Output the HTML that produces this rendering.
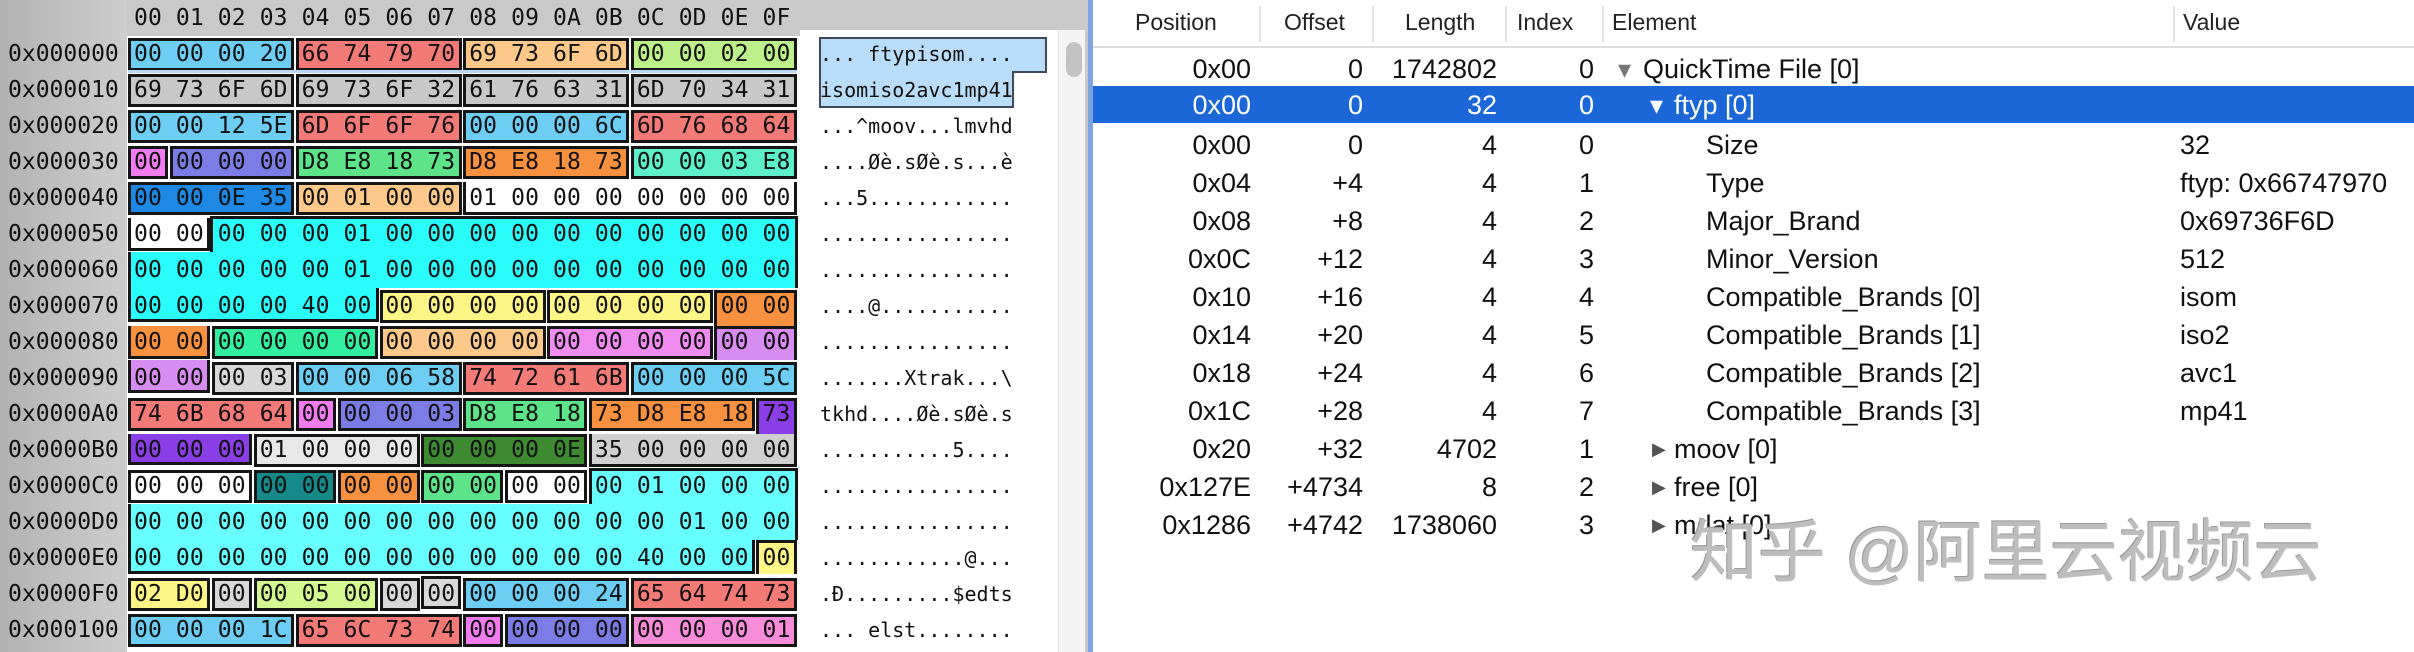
<!DOCTYPE html>
<html><head><meta charset="utf-8"><style>
*{margin:0;padding:0}
body{width:2414px;height:652px;position:relative;overflow:hidden;background:#fff;font-family:"Liberation Sans",sans-serif}
.a{position:absolute}
i{position:absolute;height:33px;border:3px solid #151515;box-sizing:border-box;display:block}
i.n{border-top:none;border-bottom:none;height:36px}
.m{font-family:"DejaVu Sans Mono","Liberation Mono",monospace;white-space:pre;position:absolute;line-height:36px;height:36px;color:#111}
.hx{left:134px;font-size:23px;letter-spacing:0.12px}
.of{left:8px;font-size:23px}
.as{left:820px;font-size:20px}
.r{position:absolute;left:0;width:2414px;height:38px;line-height:38px;font-size:27px;color:#111}
.r span{position:absolute;white-space:pre}
.p{right:1163px}.o{right:1051px}.l{right:917px}.x{right:820px}.e{left:1706px}.v{left:2180px}
.h{position:absolute;top:0;line-height:44px;font-size:23px;color:#222}
.d{position:absolute;top:6px;height:36px;width:2px;background:#e2e2e2}
.tri{font-size:26px}
</style></head><body>
<div class="a" style="left:0;top:0;width:1087px;height:36px;background:#c9c9c9"></div>
<div class="a" style="left:0;top:0;width:127px;height:652px;background:linear-gradient(90deg,#b2b2b2,#cdcdcd)"></div>
<div class="a" style="left:800px;top:30px;width:258px;height:622px;background:#fff"></div>
<div class="a" style="left:1058px;top:30px;width:27px;height:622px;background:#f4f4f4;border-left:1px solid #e4e4e4"></div>
<div class="a" style="left:1066px;top:42px;width:16px;height:35px;background:#c2c2c2;border-radius:8px"></div>
<div class="a" style="left:1085px;top:0;width:3px;height:652px;background:#c9c9c9"></div>
<div class="a" style="left:1088px;top:0;width:5px;height:652px;background:#7ea3e0"></div>

<i style="left:128px;top:38px;width:166px;background:#6dcdf2"></i>
<i style="left:296px;top:38px;width:166px;background:#f47a78"></i>
<i style="left:463px;top:38px;width:166px;background:#fdc98a"></i>
<i style="left:631px;top:38px;width:166px;background:#bdf08a"></i>
<div class="a" style="left:128px;top:70px;width:669px;height:3px;background:#b9d6f3"></div>
<i style="left:128px;top:74px;width:166px;background:#c8c8c8"></i>
<i style="left:296px;top:74px;width:166px;background:#c8c8c8"></i>
<i style="left:463px;top:74px;width:166px;background:#c8c8c8"></i>
<i style="left:631px;top:74px;width:166px;background:#c8c8c8"></i>
<i style="left:128px;top:110px;width:166px;background:#6dcdf2"></i>
<i style="left:296px;top:110px;width:166px;background:#f47a78"></i>
<i style="left:463px;top:110px;width:166px;background:#6dcdf2"></i>
<i style="left:631px;top:110px;width:166px;background:#f47a78"></i>
<i style="left:128px;top:146px;width:40px;background:#f07cf0"></i>
<i style="left:170px;top:146px;width:124px;background:#7c7ce6"></i>
<i style="left:296px;top:146px;width:166px;background:#5de48a"></i>
<i style="left:463px;top:146px;width:166px;background:#f7913f"></i>
<i style="left:631px;top:146px;width:166px;background:#5ef0c8"></i>
<i style="left:128px;top:182px;width:166px;background:#1e88e5"></i>
<i style="left:296px;top:182px;width:166px;background:#fdc98a"></i>
<i style="left:463px;top:182px;width:334px;background:#fff;border-top:none"></i>
<i style="left:128px;top:218px;width:82px;background:#fff;border-top:none"></i>
<i class="n" style="left:210px;top:216px;width:588px;background:#2afcfc;border-top:3px solid #151515;height:36px"></i>
<i class="n" style="left:128px;top:252px;width:670px;background:#2afcfc"></i>
<i class="n" style="left:128px;top:288px;width:251px;background:#2afcfc;border-bottom:3px solid #151515;height:34px"></i>
<i style="left:380px;top:290px;width:166px;background:#fdf585"></i>
<i style="left:547px;top:290px;width:166px;background:#fdf585"></i>
<i style="left:714px;top:290px;width:83px;background:#f7913f;border-bottom:none;height:36px"></i>
<i style="left:128px;top:326px;width:82px;background:#f7913f;border-top:none"></i>
<i style="left:212px;top:326px;width:166px;background:#33f0a0"></i>
<i style="left:380px;top:326px;width:166px;background:#fdc98a"></i>
<i style="left:547px;top:326px;width:166px;background:#f08cf0"></i>
<i style="left:714px;top:326px;width:83px;background:#d68cf0;border-bottom:none;height:34px"></i>
<i style="left:128px;top:360px;width:82px;background:#d68cf0;border-top:none"></i>
<i style="left:212px;top:362px;width:82px;background:#d8d8d8"></i>
<i style="left:296px;top:362px;width:166px;background:#6dcdf2"></i>
<i style="left:463px;top:362px;width:166px;background:#f47a78"></i>
<i style="left:631px;top:362px;width:166px;background:#6dcdf2"></i>
<i style="left:128px;top:398px;width:166px;background:#f47a78"></i>
<i style="left:296px;top:398px;width:40px;background:#f07cf0"></i>
<i style="left:338px;top:398px;width:124px;background:#7c7ce6"></i>
<i style="left:463px;top:398px;width:124px;background:#5de48a"></i>
<i style="left:589px;top:398px;width:166px;background:#f7913f"></i>
<i style="left:756px;top:398px;width:41px;background:#8a3ee6;border-bottom:none;height:36px"></i>
<i style="left:128px;top:434px;width:124px;background:#8a3ee6;border-top:none;height:31px"></i>
<i style="left:254px;top:434px;width:166px;background:#e8e8e8"></i>
<i style="left:421px;top:434px;width:166px;background:#3d8a30"></i>
<i style="left:589px;top:434px;width:208px;background:#d0d0d0;border-top:none"></i>
<i style="left:128px;top:470px;width:124px;background:#fff"></i>
<i style="left:254px;top:470px;width:82px;background:#168a8a"></i>
<i style="left:338px;top:470px;width:82px;background:#f7913f"></i>
<i style="left:421px;top:470px;width:82px;background:#5de48a"></i>
<i style="left:505px;top:470px;width:82px;background:#fff"></i>
<i class="n" style="left:589px;top:468px;width:209px;background:#66fefe;border-top:3px solid #151515"></i>
<i class="n" style="left:128px;top:504px;width:670px;background:#66fefe"></i>
<i class="n" style="left:128px;top:540px;width:627px;background:#66fefe;border-bottom:3px solid #151515;height:34px"></i>
<i style="left:756px;top:540px;width:41px;background:#fdf585;border-bottom:none;height:34px"></i>
<i style="left:128px;top:578px;width:82px;background:#fdf585"></i>
<i style="left:212px;top:578px;width:40px;background:#d8d8d8"></i>
<i style="left:254px;top:578px;width:124px;background:#d4f890"></i>
<i style="left:380px;top:578px;width:40px;background:#d8d8d8"></i>
<i style="left:421px;top:576px;width:40px;background:#d8d8d8"></i>
<i style="left:463px;top:578px;width:166px;background:#6dcdf2"></i>
<i style="left:631px;top:578px;width:166px;background:#f47a78"></i>
<div class="a" style="left:128px;top:612px;width:669px;height:3px;background:#fff"></div>
<i style="left:128px;top:614px;width:166px;background:#6dcdf2"></i>
<i style="left:296px;top:614px;width:166px;background:#f47a78"></i>
<i style="left:463px;top:614px;width:40px;background:#f07cf0"></i>
<i style="left:505px;top:614px;width:124px;background:#7c7ce6"></i>
<i style="left:631px;top:614px;width:166px;background:#f78cd8"></i>

<div class="a" style="left:819px;top:37px;width:228px;height:36px;background:#b9dcf8;border:2px solid #3c4a5a;border-bottom:none;box-sizing:border-box"></div>
<div class="a" style="left:1013px;top:71px;width:34px;height:2px;background:#3c4a5a"></div>
<div class="a" style="left:819px;top:71px;width:195px;height:37px;background:#b9dcf8;border:2px solid #3c4a5a;border-top:none;box-sizing:border-box"></div>

<div class="m hx" style="top:0">00 01 02 03 04 05 06 07 08 09 0A 0B 0C 0D 0E 0F</div>
<div class="m of" style="top:36px">0x000000</div><div class="m hx" style="top:36px">00 00 00 20 66 74 79 70 69 73 6F 6D 00 00 02 00</div><div class="m as" style="top:36px">... ftypisom....</div>
<div class="m of" style="top:72px">0x000010</div><div class="m hx" style="top:72px">69 73 6F 6D 69 73 6F 32 61 76 63 31 6D 70 34 31</div><div class="m as" style="top:72px">isomiso2avc1mp41</div>
<div class="m of" style="top:108px">0x000020</div><div class="m hx" style="top:108px">00 00 12 5E 6D 6F 6F 76 00 00 00 6C 6D 76 68 64</div><div class="m as" style="top:108px">...^moov...lmvhd</div>
<div class="m of" style="top:144px">0x000030</div><div class="m hx" style="top:144px">00 00 00 00 D8 E8 18 73 D8 E8 18 73 00 00 03 E8</div><div class="m as" style="top:144px">....Øè.sØè.s...è</div>
<div class="m of" style="top:180px">0x000040</div><div class="m hx" style="top:180px">00 00 0E 35 00 01 00 00 01 00 00 00 00 00 00 00</div><div class="m as" style="top:180px">...5............</div>
<div class="m of" style="top:216px">0x000050</div><div class="m hx" style="top:216px">00 00 00 00 00 01 00 00 00 00 00 00 00 00 00 00</div><div class="m as" style="top:216px">................</div>
<div class="m of" style="top:252px">0x000060</div><div class="m hx" style="top:252px">00 00 00 00 00 01 00 00 00 00 00 00 00 00 00 00</div><div class="m as" style="top:252px">................</div>
<div class="m of" style="top:288px">0x000070</div><div class="m hx" style="top:288px">00 00 00 00 40 00 00 00 00 00 00 00 00 00 00 00</div><div class="m as" style="top:288px">....@...........</div>
<div class="m of" style="top:324px">0x000080</div><div class="m hx" style="top:324px">00 00 00 00 00 00 00 00 00 00 00 00 00 00 00 00</div><div class="m as" style="top:324px">................</div>
<div class="m of" style="top:360px">0x000090</div><div class="m hx" style="top:360px">00 00 00 03 00 00 06 58 74 72 61 6B 00 00 00 5C</div><div class="m as" style="top:360px">.......Xtrak...\</div>
<div class="m of" style="top:396px">0x0000A0</div><div class="m hx" style="top:396px">74 6B 68 64 00 00 00 03 D8 E8 18 73 D8 E8 18 73</div><div class="m as" style="top:396px">tkhd....Øè.sØè.s</div>
<div class="m of" style="top:432px">0x0000B0</div><div class="m hx" style="top:432px">00 00 00 01 00 00 00 00 00 00 0E 35 00 00 00 00</div><div class="m as" style="top:432px">...........5....</div>
<div class="m of" style="top:468px">0x0000C0</div><div class="m hx" style="top:468px">00 00 00 00 00 00 00 00 00 00 00 00 01 00 00 00</div><div class="m as" style="top:468px">................</div>
<div class="m of" style="top:504px">0x0000D0</div><div class="m hx" style="top:504px">00 00 00 00 00 00 00 00 00 00 00 00 00 01 00 00</div><div class="m as" style="top:504px">................</div>
<div class="m of" style="top:540px">0x0000E0</div><div class="m hx" style="top:540px">00 00 00 00 00 00 00 00 00 00 00 00 40 00 00 00</div><div class="m as" style="top:540px">............@...</div>
<div class="m of" style="top:576px">0x0000F0</div><div class="m hx" style="top:576px">02 D0 00 00 05 00 00 00 00 00 00 24 65 64 74 73</div><div class="m as" style="top:576px">.Đ.........$edts</div>
<div class="m of" style="top:612px">0x000100</div><div class="m hx" style="top:612px">00 00 00 1C 65 6C 73 74 00 00 00 00 00 00 00 01</div><div class="m as" style="top:612px">... elst........</div>

<div class="h" style="left:1135px">Position</div>
<div class="h" style="left:1284px">Offset</div>
<div class="h" style="left:1405px">Length</div>
<div class="h" style="left:1517px">Index</div>
<div class="h" style="left:1612px">Element</div>
<div class="h" style="left:2183px">Value</div>
<div class="d" style="left:1259px"></div><div class="d" style="left:1372px"></div><div class="d" style="left:1505px"></div><div class="d" style="left:1602px"></div><div class="d" style="left:2173px"></div>
<div class="a" style="left:1093px;top:46px;width:1321px;height:2px;background:#dcdcdc"></div>
<div class="a" style="left:1093px;top:86px;width:1321px;height:37px;background:#1c67d8"></div>

<div class="r" style="top:50px"><span class="p">0x00</span><span class="o">0</span><span class="l">1742802</span><span class="x">0</span><span style="left:1618px;color:#777" class="tri">▾</span><span style="left:1643px">QuickTime File [0]</span></div>
<div class="r" style="top:86px;color:#fff"><span class="p">0x00</span><span class="o">0</span><span class="l">32</span><span class="x">0</span><span style="left:1650px" class="tri">▾</span><span style="left:1674px">ftyp [0]</span></div>
<div class="r" style="top:126px"><span class="p">0x00</span><span class="o">0</span><span class="l">4</span><span class="x">0</span><span class="e">Size</span><span class="v">32</span></div>
<div class="r" style="top:164px"><span class="p">0x04</span><span class="o">+4</span><span class="l">4</span><span class="x">1</span><span class="e">Type</span><span class="v">ftyp: 0x66747970</span></div>
<div class="r" style="top:202px"><span class="p">0x08</span><span class="o">+8</span><span class="l">4</span><span class="x">2</span><span class="e">Major_Brand</span><span class="v">0x69736F6D</span></div>
<div class="r" style="top:240px"><span class="p">0x0C</span><span class="o">+12</span><span class="l">4</span><span class="x">3</span><span class="e">Minor_Version</span><span class="v">512</span></div>
<div class="r" style="top:278px"><span class="p">0x10</span><span class="o">+16</span><span class="l">4</span><span class="x">4</span><span class="e">Compatible_Brands [0]</span><span class="v">isom</span></div>
<div class="r" style="top:316px"><span class="p">0x14</span><span class="o">+20</span><span class="l">4</span><span class="x">5</span><span class="e">Compatible_Brands [1]</span><span class="v">iso2</span></div>
<div class="r" style="top:354px"><span class="p">0x18</span><span class="o">+24</span><span class="l">4</span><span class="x">6</span><span class="e">Compatible_Brands [2]</span><span class="v">avc1</span></div>
<div class="r" style="top:392px"><span class="p">0x1C</span><span class="o">+28</span><span class="l">4</span><span class="x">7</span><span class="e">Compatible_Brands [3]</span><span class="v">mp41</span></div>
<div class="r" style="top:430px"><span class="p">0x20</span><span class="o">+32</span><span class="l">4702</span><span class="x">1</span><span style="left:1652px;color:#555;font-size:18px">▶</span><span style="left:1674px">moov [0]</span></div>
<div class="r" style="top:468px"><span class="p">0x127E</span><span class="o">+4734</span><span class="l">8</span><span class="x">2</span><span style="left:1652px;color:#555;font-size:18px">▶</span><span style="left:1674px">free [0]</span></div>
<div class="r" style="top:506px"><span class="p">0x1286</span><span class="o">+4742</span><span class="l">1738060</span><span class="x">3</span><span style="left:1652px;color:#555;font-size:18px">▶</span><span style="left:1674px">mdat [0]</span></div>

<div class="a" style="left:1690px;top:508px;font-size:68px;line-height:90px;color:#bdbdbd;text-shadow:2px 2px 0 #fff,-1px -1px 0 #999;font-family:'Liberation Sans','Noto Sans CJK SC',sans-serif;white-space:pre">知乎 @阿里云视频云</div>
</body></html>
